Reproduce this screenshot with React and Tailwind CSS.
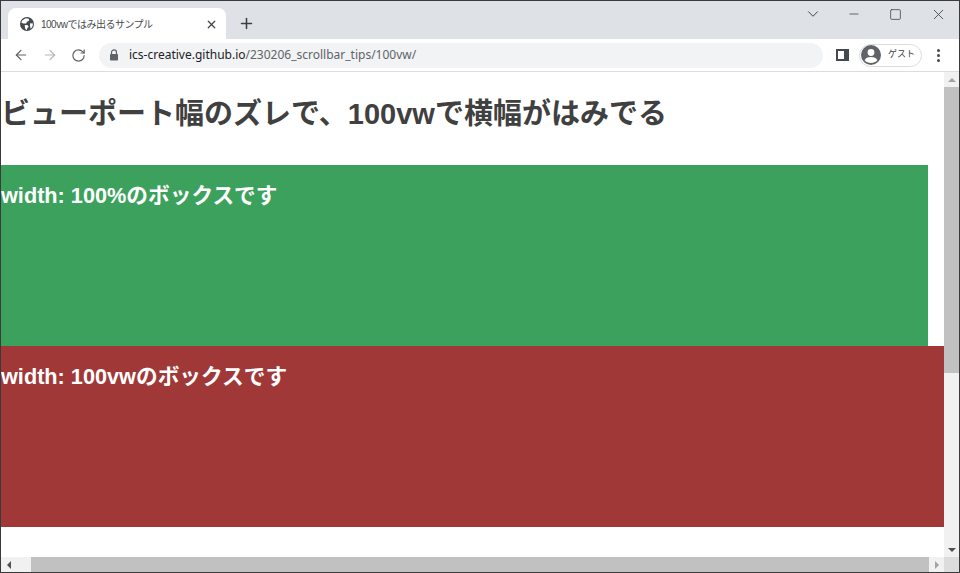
import React from 'react';
import { ArrowLeft, ArrowRight, RotateCw, X, Plus, ChevronDown, Minus, Square } from 'lucide-react';

function Globe() {
  return (
    <svg width="14" height="14" viewBox="0 0 16 16" className="shrink-0">
      <circle cx="8" cy="8" r="8" fill="#45494d" />
      <path d="M2.5 4 L6.5 1.5 L10 2 L10.5 4 L8 5.5 L7 7.5 L4 7.5 L1.5 6.5 Z M5.5 9 L8.5 9.2 L10 11 L8.5 12.5 L7.5 15 L6 13.5 L5.5 11.5 Z M11.5 7 L15 7.5 L14 11.5 L12 13.5 L11.5 10 Z" fill="#fff" />
    </svg>
  );
}

function Avatar() {
  return (
    <svg width="20" height="20" viewBox="0 0 20 20" className="shrink-0">
      <circle cx="10" cy="10" r="10" fill="#5f6368" />
      <circle cx="10" cy="7.5" r="3.4" fill="#fff" />
      <path d="M3.6 15.2 C5 12.6 7.6 12 10 12 C12.4 12 15 12.6 16.4 15.2 C14.8 17 12.5 18 10 18 C7.5 18 5.2 17 3.6 15.2 Z" fill="#fff" />
    </svg>
  );
}

function LockIcon() {
  return (
    <svg width="10" height="12" viewBox="0 0 10 12" className="shrink-0">
      <path d="M2.5 5 V3.4 A2.5 2.5 0 0 1 7.5 3.4 V5" fill="none" stroke="#5f6368" strokeWidth="1.2" />
      <rect x="1" y="5" width="8" height="6.5" rx="0.8" fill="#5f6368" />
    </svg>
  );
}

function TabStrip() {
  return (
    <div className="flex h-[38px] shrink-0 items-end bg-[#dee1e6] pl-[7px]">
      <div className="flex h-[31px] w-[218px] items-center rounded-t-lg bg-white pl-[12px] pr-[8px] pt-[1px]">
        <Globe />
        <span className="ml-[7px] flex-1 truncate pt-[1px] text-[10px] tracking-[-0.5px] text-[#45494d]">100vwではみ出るサンプル</span>
        <X size={13} strokeWidth={2.2} className="text-[#3c4043]" />
      </div>
      <Plus size={17} strokeWidth={2.2} className="mb-[7px] ml-[12px] text-[#3c4043]" />
      <div className="ml-auto flex h-full items-start text-[#3c4043]">
        <ChevronDown size={18} strokeWidth={1.3} className="mr-[25px] mt-[4px]" />
        <Minus size={14} strokeWidth={1.3} className="mr-[28px] mt-[6px]" />
        <Square size={13} strokeWidth={1.4} className="mr-[28px] mt-[7px]" />
        <X size={17} strokeWidth={1.2} className="mr-[12px] mt-[5px]" />
      </div>
    </div>
  );
}

function Toolbar() {
  return (
    <div className="flex h-[33px] shrink-0 items-center border-b border-[#dadce0] bg-white pl-[12px]">
      <ArrowLeft size={16} strokeWidth={1.8} className="text-[#5f6368]" />
      <ArrowRight size={16} strokeWidth={1.8} className="ml-[13px] text-[#b4b6b9]" />
      <RotateCw size={15} strokeWidth={1.9} className="ml-[13px] text-[#5f6368]" />
      <div className="ml-[13px] flex h-[25px] w-[724px] items-center rounded-full bg-[#f1f3f4] pl-[10px] font-['Noto_Sans',sans-serif] text-[12px]">
        <LockIcon />
        <span className="ml-[10px] text-[#202124]">ics-creative.github.io</span>
        <span className="text-[#5f6368]">/230206_scrollbar_tips/100vw/</span>
      </div>
      <div className="ml-[13px] h-[12px] w-[13px] border-2 border-r-[5px] border-[#45494d]" />
      <div className="ml-[10px] flex h-[23px] w-[63px] items-center rounded-full border border-[#dadce0] pl-[1px]">
        <Avatar />
        <span className="ml-[7px] text-[9px] text-[#3c4043]">ゲスト</span>
      </div>
      <div className="ml-[15px] flex flex-col gap-[2px]">
        <div className="h-[3px] w-[3px] rounded-full bg-[#45494d]" />
        <div className="h-[3px] w-[3px] rounded-full bg-[#45494d]" />
        <div className="h-[3px] w-[3px] rounded-full bg-[#45494d]" />
      </div>
    </div>
  );
}

function Page() {
  return (
    <div className="h-full w-[943px] overflow-hidden bg-white">
      <h1 className="pb-[32px] pt-[24px] text-[29px] font-bold leading-[37px] text-[#404040]">ビューポート幅のズレで、100vwで横幅がはみでる</h1>
      <div className="h-[181px] w-[927px] bg-[#3ba15c] pt-[17px] text-[21.7px] font-bold leading-[28px] text-white">width: 100%のボックスです</div>
      <div className="h-[181px] w-[943px] bg-[#a03838] pt-[17px] text-[21.7px] font-bold leading-[28px] text-white">width: 100vwのボックスです</div>
    </div>
  );
}

function VScrollbar() {
  return (
    <div className="flex w-[15px] shrink-0 flex-col bg-[#f1f1f1]">
      <div className="flex h-[15px] items-center justify-center">
        <div className="h-0 w-0 border-x-[4px] border-b-[4px] border-x-transparent border-b-[#a3a3a3]" />
      </div>
      <div className="h-[286px] bg-[#c1c1c1]" />
      <div className="flex-1" />
      <div className="flex h-[15px] items-center justify-center">
        <div className="h-0 w-0 border-x-[4px] border-t-[4px] border-x-transparent border-t-[#505050]" />
      </div>
    </div>
  );
}

function HScrollbar() {
  return (
    <div className="flex h-[15px] shrink-0 bg-[#f1f1f1]">
      <div className="flex w-[15px] items-center justify-center">
        <div className="h-0 w-0 border-y-[4px] border-r-[4px] border-y-transparent border-r-[#505050]" />
      </div>
      <div className="w-[15px]" />
      <div className="flex-1 bg-[#c1c1c1]" />
      <div className="flex w-[15px] items-center justify-center">
        <div className="h-0 w-0 border-y-[4px] border-l-[4px] border-y-transparent border-l-[#a3a3a3]" />
      </div>
      <div className="w-[15px] bg-[#dcdcdc]" />
    </div>
  );
}

export default function App() {
  return (
    <div className="flex h-[573px] w-[960px] flex-col overflow-hidden border border-[#3a3a3a] bg-white font-['Liberation_Sans','Noto_Sans_CJK_JP',sans-serif]">
      <TabStrip />
      <Toolbar />
      <div className="flex min-h-0 flex-1">
        <Page />
        <VScrollbar />
      </div>
      <HScrollbar />
    </div>
  );
}
